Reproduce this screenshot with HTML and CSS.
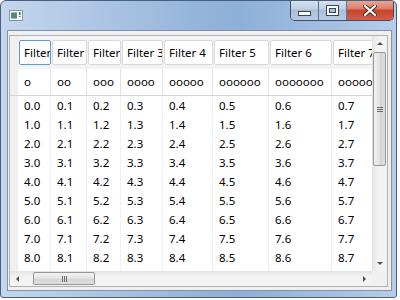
FILE: index.html
```html
<!DOCTYPE html>
<html>
<head>
<meta charset="utf-8">
<link rel="stylesheet" href="styles.css">
</head>
<body>
<div class="window">
  <div class="titlebar">
    <svg class="appicon" width="14" height="11" viewBox="0 0 14 11">
      <rect x="0.5" y="0.5" width="13" height="10" fill="#f4f6f8" stroke="#8a97a6"/>
      <rect x="2" y="2.5" width="6" height="6" fill="#4f8a78"/>
      <rect x="10" y="2" width="1.5" height="3" fill="#58606a"/>
      <rect x="10" y="6" width="1.5" height="1" fill="#58606a"/>
    </svg>
    <div class="caption">
      <div class="cbtn cmin"><span class="glyph-min"></span></div>
      <div class="cbtn cmax"><span class="glyph-max"></span></div>
      <div class="cbtn cclose">
        <svg width="14" height="11" viewBox="0 0 14 11">
          <path d="M2 1 L12 10 M12 1 L2 10" stroke="#4a2a24" stroke-width="4" stroke-linecap="round"/>
          <path d="M2 1 L12 10 M12 1 L2 10" stroke="#ffffff" stroke-width="2.2" stroke-linecap="round"/>
        </svg>
      </div>
    </div>
  </div>
  <div class="client">
    <div class="table">
      <div class="view">
        <div class="grid filters">
          <div class="vh"></div>
          <div class="fcell"><div class="fedit focus">Filter</div></div>
          <div class="fcell"><div class="fedit">Filter</div></div>
          <div class="fcell"><div class="fedit">Filter</div></div>
          <div class="fcell"><div class="fedit">Filter 3</div></div>
          <div class="fcell"><div class="fedit">Filter 4</div></div>
          <div class="fcell"><div class="fedit">Filter 5</div></div>
          <div class="fcell"><div class="fedit">Filter 6</div></div>
          <div class="fcell"><div class="fedit">Filter 7</div></div>
        </div>
        <div class="grid labels">
          <div class="vh"></div>
          <div class="lcell">o</div>
          <div class="lcell">oo</div>
          <div class="lcell">ooo</div>
          <div class="lcell">oooo</div>
          <div class="lcell">ooooo</div>
          <div class="lcell">oooooo</div>
          <div class="lcell">ooooooo</div>
          <div class="lcell">oooooooo</div>
        </div>
        <div class="rows">
          <div class="grid row"><div class="vh"></div><div class="dc">0.0</div><div class="dc">0.1</div><div class="dc">0.2</div><div class="dc">0.3</div><div class="dc">0.4</div><div class="dc">0.5</div><div class="dc">0.6</div><div class="dc">0.7</div></div>
          <div class="grid row"><div class="vh"></div><div class="dc">1.0</div><div class="dc">1.1</div><div class="dc">1.2</div><div class="dc">1.3</div><div class="dc">1.4</div><div class="dc">1.5</div><div class="dc">1.6</div><div class="dc">1.7</div></div>
          <div class="grid row"><div class="vh"></div><div class="dc">2.0</div><div class="dc">2.1</div><div class="dc">2.2</div><div class="dc">2.3</div><div class="dc">2.4</div><div class="dc">2.5</div><div class="dc">2.6</div><div class="dc">2.7</div></div>
          <div class="grid row"><div class="vh"></div><div class="dc">3.0</div><div class="dc">3.1</div><div class="dc">3.2</div><div class="dc">3.3</div><div class="dc">3.4</div><div class="dc">3.5</div><div class="dc">3.6</div><div class="dc">3.7</div></div>
          <div class="grid row"><div class="vh"></div><div class="dc">4.0</div><div class="dc">4.1</div><div class="dc">4.2</div><div class="dc">4.3</div><div class="dc">4.4</div><div class="dc">4.5</div><div class="dc">4.6</div><div class="dc">4.7</div></div>
          <div class="grid row"><div class="vh"></div><div class="dc">5.0</div><div class="dc">5.1</div><div class="dc">5.2</div><div class="dc">5.3</div><div class="dc">5.4</div><div class="dc">5.5</div><div class="dc">5.6</div><div class="dc">5.7</div></div>
          <div class="grid row"><div class="vh"></div><div class="dc">6.0</div><div class="dc">6.1</div><div class="dc">6.2</div><div class="dc">6.3</div><div class="dc">6.4</div><div class="dc">6.5</div><div class="dc">6.6</div><div class="dc">6.7</div></div>
          <div class="grid row"><div class="vh"></div><div class="dc">7.0</div><div class="dc">7.1</div><div class="dc">7.2</div><div class="dc">7.3</div><div class="dc">7.4</div><div class="dc">7.5</div><div class="dc">7.6</div><div class="dc">7.7</div></div>
          <div class="grid row"><div class="vh"></div><div class="dc">8.0</div><div class="dc">8.1</div><div class="dc">8.2</div><div class="dc">8.3</div><div class="dc">8.4</div><div class="dc">8.5</div><div class="dc">8.6</div><div class="dc">8.7</div></div>
          <div class="grid row"><div class="vh"></div><div class="dc">9.0</div><div class="dc">9.1</div><div class="dc">9.2</div><div class="dc">9.3</div><div class="dc">9.4</div><div class="dc">9.5</div><div class="dc">9.6</div><div class="dc">9.7</div></div>
        </div>
      </div>
      <div class="vscroll">
        <div class="arrow up"></div>
        <div class="vtrack">
          <div class="vthumb"><span class="grip-h"></span></div>
        </div>
        <div class="arrow down"></div>
      </div>
      <div class="hscroll">
        <div class="arrow left"></div>
        <div class="htrack">
          <div class="hthumb"><span class="grip-v"></span></div>
        </div>
        <div class="arrow right"></div>
      </div>
      <div class="corner"></div>
    </div>
  </div>
</div>
</body>
</html>
```
FILE: styles.css
```css
html, body {
  margin: 0;
  padding: 0;
  background: #ffffff;
}
body {
  width: 400px;
  height: 300px;
  overflow: hidden;
  font-family: "Noto Sans", "Open Sans", "DejaVu Sans", sans-serif;
  font-size: 11.5px;
  color: #000;
}
.window {
  width: 397px;
  height: 298px;
  box-sizing: border-box;
  border: 1px solid #4a5e7e;
  border-radius: 6px 6px 3px 3px;
  background: linear-gradient(90deg, #c3d6ec 0%, #b2c9e6 20%, #9ab7dc 45%, #8eafd8 60%, #a6c0e2 85%, #b8cde8 100%);
  display: flex;
  flex-direction: column;
  padding: 0 4px 6px 6px;
  overflow: hidden;
}
.titlebar {
  height: 29px;
  display: flex;
  align-items: flex-start;
  flex-shrink: 0;
}
.appicon {
  margin-top: 9px;
  margin-left: 2px;
}
.caption {
  margin-left: auto;
  margin-top: -1px;
  display: flex;
  height: 20px;
  border: 1px solid #3d4f6c;
  border-top: none;
  border-radius: 0 0 5px 5px;
  overflow: hidden;
  margin-right: -2px;
}
.cbtn {
  height: 20px;
  display: flex;
  align-items: center;
  justify-content: center;
}
.cmin, .cmax {
  width: 27px;
  background: linear-gradient(180deg, #d7e2ef 0%, #c0d0e4 45%, #a9bdd7 50%, #b8cbe2 100%);
  border-right: 1px solid #5f738f;
}
.cclose {
  width: 46px;
  background: linear-gradient(180deg, #e9a99b 0%, #dc7d68 45%, #c8432b 50%, #d45c44 100%);
}
.glyph-min {
  width: 11px;
  height: 3px;
  background: #fff;
  border: 1px solid #3b4658;
  margin-top: 6px;
}
.glyph-max {
  width: 7px;
  height: 5px;
  border: 2px solid #fff;
  outline: 1px solid #3b4658;
  box-shadow: inset 0 0 0 1px #3b4658;
}
.client {
  flex: 1;
  background: #f0f0f0;
  border: 1px solid #7f93b0;
  display: flex;
  padding: 4px 3px 3px 1px;
  min-height: 0;
}
.table {
  flex: 1;
  display: grid;
  grid-template-columns: 1fr 15px;
  grid-template-rows: 1fr 15px;
  border: 1px solid #adb2b9;
  background: #f0f0f0;
  min-width: 0;
  min-height: 0;
}
.view {
  background: #ffffff;
  overflow: hidden;
  min-width: 0;
  min-height: 0;
}
.grid {
  display: grid;
  grid-template-columns: 8px 33px 36px 34px 42px 50px 56px 63px 64px;
}
.filters {
  height: 33px;
  background: #f3f3f3;
  align-items: center;
}
.vh {
  background: #f0f0f0;
}
.filters .vh, .labels .vh {
  align-self: stretch;
}
.fcell {
  padding: 0 0 0 1px;
}
.fedit {
  height: 25px;
  box-sizing: border-box;
  border: 1px solid #d5d9de;
  border-radius: 2px;
  background: #ffffff;
  padding: 0 0 0 4px;
  line-height: 23px;
  white-space: nowrap;
  overflow: hidden;
}
.fedit.focus {
  border-color: #5a9ad8;
}
.labels {
  height: 26px;
  background: #ffffff;
  border-bottom: 1px solid #d5d5d5;
}
.lcell {
  border-right: 1px solid #e3e3e3;
  padding-left: 6px;
  line-height: 26px;
  white-space: nowrap;
  overflow: hidden;
}
.row {
  height: 19px;
}
.dc {
  padding-left: 6px;
  line-height: 19px;
  border-right: 1px solid #eef2f7;
  white-space: nowrap;
}
.vscroll {
  display: flex;
  flex-direction: column;
  background: linear-gradient(90deg, #e4e4e4, #f3f3f3 40%, #f3f3f3);
}
.hscroll {
  display: flex;
  background: linear-gradient(180deg, #e4e4e4, #f3f3f3 40%, #f3f3f3);
}
.corner {
  background: #f0f0f0;
}
.arrow {
  width: 15px;
  height: 15px;
  display: flex;
  align-items: center;
  justify-content: center;
  flex-shrink: 0;
}
.arrow::before {
  content: "";
  width: 0;
  height: 0;
  border: 3px solid transparent;
}
.arrow.up::before { border-bottom: 3px solid #505050; border-top: 0; }
.arrow.down::before { border-top: 3px solid #505050; border-bottom: 0; }
.arrow.left::before { border-right: 3px solid #505050; border-left: 0; }
.arrow.right::before { border-left: 3px solid #505050; border-right: 0; }
.vtrack {
  flex: 1;
  padding-top: 1px;
}
.vthumb {
  height: 114px;
  margin: 0 1px;
  box-sizing: border-box;
  border: 1px solid #979797;
  border-radius: 2px;
  background: linear-gradient(90deg, #f2f2f2, #e2e2e2 50%, #d2d2d2 51%, #e0e0e0);
  display: flex;
  align-items: center;
  justify-content: center;
}
.grip-h {
  width: 6px;
  height: 5px;
  background: repeating-linear-gradient(180deg, #6b6b6b 0 1px, transparent 1px 2px);
}
.htrack {
  flex: 1;
}
.hthumb {
  width: 62px;
  height: 13px;
  margin-top: 1px;
  margin-left: 8px;
  box-sizing: border-box;
  border: 1px solid #979797;
  border-radius: 2px;
  background: linear-gradient(180deg, #f2f2f2, #e2e2e2 50%, #d2d2d2 51%, #e0e0e0);
  display: flex;
  align-items: center;
  justify-content: center;
}
.grip-v {
  width: 5px;
  height: 6px;
  background: repeating-linear-gradient(90deg, #6b6b6b 0 1px, transparent 1px 2px);
}
```
